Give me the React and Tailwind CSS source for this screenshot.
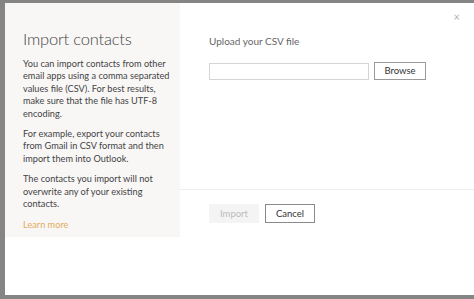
export default function App() {
  return (
    <div className="w-[474px] h-[299px] bg-[#858585] pl-[5px] pt-[3px] pb-[4px] overflow-hidden" style={{ fontFamily: 'Lato, "Open Sans", sans-serif' }}>
      <div className="relative flex h-full bg-white">
        {/* Left info panel */}
        <div className="w-[175px] h-[234px] bg-[#f8f7f6] pl-[18px] pr-[8px] pt-[25px]">
          <h1 className="text-[16.5px] font-light leading-[22px] text-[#444] tracking-[-0.2px]">Import contacts</h1>
          <div className="mt-[8px] text-[9.2px] leading-[12.4px] text-[#444]">
            <p>You can import contacts from other email apps using a comma separated values file (CSV). For best results, make sure that the file has UTF-8 encoding.</p>
            <p className="mt-[8px]">For example, export your contacts from Gmail in CSV format and then import them into Outlook.</p>
            <p className="mt-[8px]">The contacts you import will not overwrite any of your existing contacts.</p>
            <p className="mt-[9px] text-[#e2ad5c]">Learn more</p>
          </div>
        </div>

        {/* Right upload panel */}
        <div className="flex-1 flex flex-col">
          <div className="h-[187px] border-b border-[#efefef] pl-[29px] pt-[31px]">
            <p className="text-[10px] leading-[14px] text-[#666]">Upload your CSV file</p>
            <div className="mt-[14px] flex items-center gap-[5px]">
              <div className="w-[160px] h-[17px] border border-[#d4d4d4] bg-white" />
              <button className="w-[52px] h-[18px] border border-[#9a9a9a] bg-white text-[9.5px] text-[#333] leading-none">Browse</button>
            </div>
          </div>
          <div className="pl-[29px] pt-[14px] flex gap-[6px]">
            <button className="w-[50px] h-[19px] bg-[#f4f4f4] text-[9.5px] text-[#bcbcbc] leading-none">Import</button>
            <button className="w-[50px] h-[19px] border border-[#8a8a8a] bg-white text-[9.5px] text-[#333] leading-none">Cancel</button>
          </div>
          <span className="absolute right-[14px] top-[8px] text-[11px] text-[#b0b0b0] leading-none">×</span>
        </div>
      </div>
    </div>
  );
}
